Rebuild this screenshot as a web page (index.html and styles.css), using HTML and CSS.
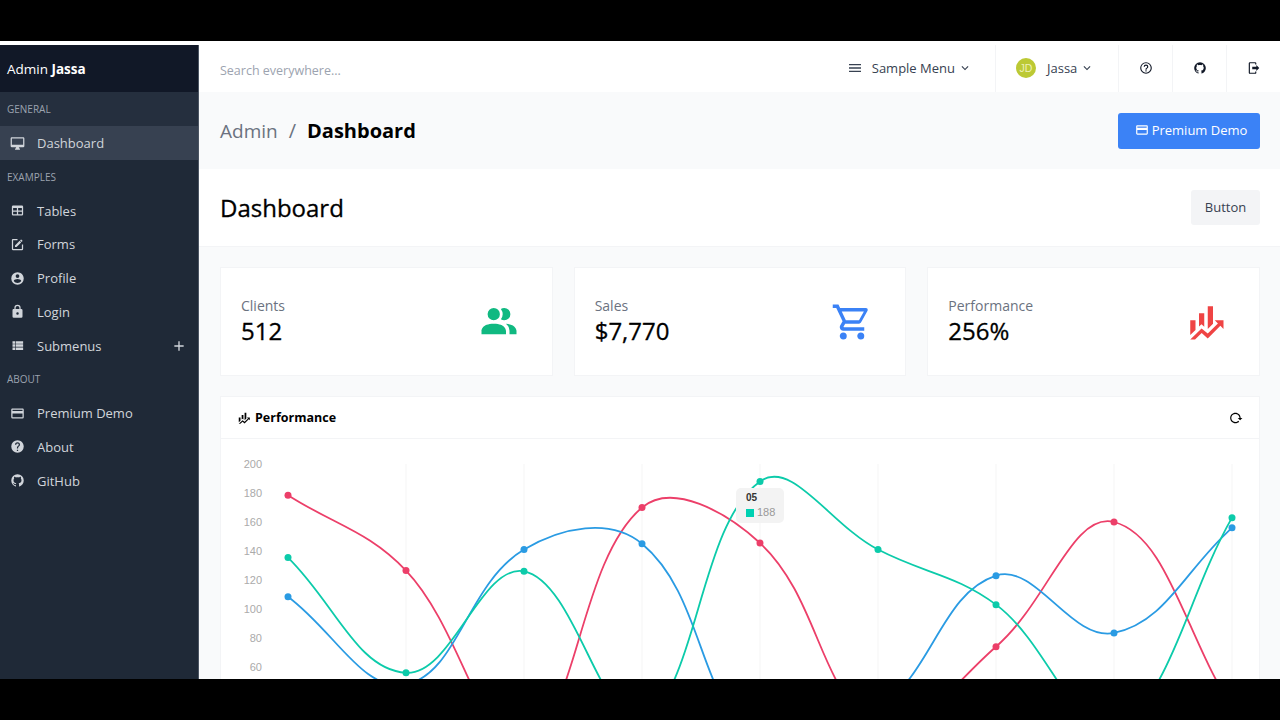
FILE: index.html
```html
<!DOCTYPE html>
<html lang="en">
<head>
  <meta charset="UTF-8" />
  <title>Admin Jassa - Dashboard</title>
  <link rel="stylesheet" href="styles.css">
</head>
<body>
  <svg class="sprite" xmlns="http://www.w3.org/2000/svg">
    <symbol id="i-monitor" viewBox="0 0 24 24"><path d="M21,14H3V4H21M21,2H3C1.89,2 1,2.89 1,4V16A2,2 0 0,0 3,18H10L8,21V22H16V21L14,18H21A2,2 0 0,0 23,16V4C23,2.89 22.1,2 21,2Z"/></symbol>
    <symbol id="i-table" viewBox="0 0 24 24"><path d="M5,4H19A2,2 0 0,1 21,6V18A2,2 0 0,1 19,20H5A2,2 0 0,1 3,18V6A2,2 0 0,1 5,4M5,8V12H11V8H5M13,8V12H19V8H13M5,14V18H11V14H5M13,14V18H19V14H13Z"/></symbol>
    <symbol id="i-edit" viewBox="0 0 24 24"><path d="M5,3C3.89,3 3,3.89 3,5V19A2,2 0 0,0 5,21H19A2,2 0 0,0 21,19V12H19V19H5V5H12V3H5M17.78,4C17.59,4 17.39,4.07 17.24,4.22L16.02,5.43L18.52,7.93L19.74,6.72C20.04,6.43 20.04,5.96 19.74,5.66L18.34,4.22C18.19,4.07 17.99,4 17.78,4M15.37,6.12L8,13.5V16H10.5L17.87,8.62L15.37,6.12Z"/></symbol>
    <symbol id="i-account" viewBox="0 0 24 24"><path d="M12,19.2C9.5,19.2 7.29,17.92 6,16C6.03,14 10,12.9 12,12.9C14,12.9 17.97,14 18,16C16.71,17.92 14.5,19.2 12,19.2M12,5A3,3 0 0,1 15,8A3,3 0 0,1 12,11A3,3 0 0,1 9,8A3,3 0 0,1 12,5M12,2A10,10 0 0,0 2,12A10,10 0 0,0 12,22A10,10 0 0,0 22,12C22,6.47 17.5,2 12,2Z"/></symbol>
    <symbol id="i-lock" viewBox="0 0 24 24"><path d="M12,17A2,2 0 0,0 14,15C14,13.89 13.1,13 12,13A2,2 0 0,0 10,15A2,2 0 0,0 12,17M18,8A2,2 0 0,1 20,10V20A2,2 0 0,1 18,22H6A2,2 0 0,1 4,20V10C4,8.89 4.9,8 6,8H7V6A5,5 0 0,1 12,1A5,5 0 0,1 17,6V8H18M12,3A3,3 0 0,0 9,6V8H15V6A3,3 0 0,0 12,3Z"/></symbol>
    <symbol id="i-list" viewBox="0 0 24 24"><path d="M9,5V9H21V5M9,19H21V15H9M9,14H21V10H9M4,9H8V5H4M4,19H8V15H4M4,14H8V10H4V14Z"/></symbol>
    <symbol id="i-card" viewBox="0 0 24 24"><path d="M20,8H4V6H20M20,18H4V12H20M20,4H4C2.89,4 2,4.89 2,6V18A2,2 0 0,0 4,20H20A2,2 0 0,0 22,18V6C22,4.89 21.1,4 20,4Z"/></symbol>
    <symbol id="i-help" viewBox="0 0 24 24"><path d="M15.07,11.25L14.17,12.17C13.45,12.89 13,13.5 13,15H11V14.5C11,13.39 11.45,12.39 12.17,11.67L13.41,10.41C13.78,10.05 14,9.55 14,9C14,7.89 13.1,7 12,7A2,2 0 0,0 10,9H8A4,4 0 0,1 12,5A4,4 0 0,1 16,9C16,9.88 15.64,10.67 15.07,11.25M13,19H11V17H13M12,2A10,10 0 0,0 2,12A10,10 0 0,0 12,22A10,10 0 0,0 22,12C22,6.47 17.5,2 12,2Z"/></symbol>
    <symbol id="i-help-outline" viewBox="0 0 24 24"><path d="M11,18H13V16H11V18M12,2A10,10 0 0,0 2,12A10,10 0 0,0 12,22A10,10 0 0,0 22,12A10,10 0 0,0 12,2M12,20C7.59,20 4,16.41 4,12C4,7.59 7.59,4 12,4C16.41,4 20,7.59 20,12C20,16.41 16.41,20 12,20M12,6A4,4 0 0,0 8,10H10A2,2 0 0,1 12,8A2,2 0 0,1 14,10C14,12 11,11.75 11,15H13C13,12.75 16,12.5 16,10A4,4 0 0,0 12,6Z"/></symbol>
    <symbol id="i-github" viewBox="0 0 24 24"><path d="M12,2A10,10 0 0,0 2,12C2,16.42 4.87,20.17 8.84,21.5C9.34,21.58 9.5,21.27 9.5,21C9.5,20.77 9.5,20.14 9.5,19.31C6.73,19.91 6.14,17.97 6.14,17.97C5.68,16.81 5.03,16.5 5.03,16.5C4.12,15.88 5.1,15.9 5.1,15.9C6.1,15.97 6.63,16.93 6.63,16.93C7.5,18.45 8.97,18 9.54,17.76C9.63,17.11 9.89,16.67 10.17,16.42C7.95,16.17 5.62,15.31 5.62,11.5C5.62,10.39 6,9.5 6.65,8.79C6.55,8.54 6.2,7.5 6.75,6.15C6.75,6.15 7.59,5.88 9.5,7.17C10.29,6.95 11.15,6.84 12,6.84C12.85,6.84 13.71,6.95 14.5,7.17C16.41,5.88 17.25,6.15 17.25,6.15C17.8,7.5 17.45,8.54 17.35,8.79C18,9.5 18.38,10.39 18.38,11.5C18.38,15.32 16.04,16.16 13.81,16.41C14.17,16.72 14.5,17.33 14.5,18.26C14.5,19.6 14.5,20.68 14.5,21C14.5,21.27 14.66,21.59 15.17,21.5C19.14,20.16 22,16.42 22,12A10,10 0 0,0 12,2Z"/></symbol>
    <symbol id="i-logout" viewBox="0 0 24 24"><path d="M16,17V14H9V10H16V7L21,12L16,17M14,2A2,2 0 0,1 16,4V6H14V4H5V20H14V18H16V20A2,2 0 0,1 14,22H5A2,2 0 0,1 3,20V4A2,2 0 0,1 5,2H14Z"/></symbol>
    <symbol id="i-menu" viewBox="0 0 24 24"><path d="M3,6H21V8H3V6M3,11H21V13H3V11M3,16H21V18H3V16Z"/></symbol>
    <symbol id="i-chevron" viewBox="0 0 24 24"><path d="M7.41,8.58L12,13.17L16.59,8.58L18,10L12,16L6,10L7.41,8.58Z"/></symbol>
    <symbol id="i-plus" viewBox="0 0 24 24"><path d="M19,13H13V19H11V13H5V11H11V5H13V11H19V13Z"/></symbol>
    <symbol id="i-people" viewBox="0 0 24 24"><path d="M16 17V19H2V17S2 13 9 13 16 17 16 17M12.5 7.5A3.5 3.5 0 1 0 9 11A3.5 3.5 0 0 0 12.5 7.5M15.94 13A5.32 5.32 0 0 1 18 17V19H22V17S22 13.37 15.94 13M15 4A3.39 3.39 0 0 0 13.07 4.59A5 5 0 0 1 13.07 10.41A3.39 3.39 0 0 0 15 11A3.5 3.5 0 0 0 15 4Z"/></symbol>
    <symbol id="i-cart" viewBox="0 0 24 24"><path d="M17,18A2,2 0 0,1 19,20A2,2 0 0,1 17,22C15.89,22 15,21.1 15,20C15,18.89 15.89,18 17,18M1,2H4.27L5.21,4H20A1,1 0 0,1 21,5C21,5.17 20.95,5.34 20.88,5.5L17.3,11.97C16.96,12.58 16.3,13 15.55,13H8.1L7.2,14.63L7.17,14.75A0.25,0.25 0 0,0 7.42,15H19V17H7C5.89,17 5,16.1 5,15C5,14.65 5.09,14.32 5.24,14.04L6.6,11.59L3,4H1V2M7,18A2,2 0 0,1 9,20A2,2 0 0,1 7,22C5.89,22 5,21.1 5,20C5,18.89 5.89,18 7,18M16,11L18.78,6H6.14L8.5,11H16Z"/></symbol>
    <symbol id="i-finance" viewBox="0 0 24 24"><path d="M6,16.5L3,19.44V11H6M11,14.66L9.43,13.32L8,14.64V7H11M16,13L13,16V3H16M18.81,12.81L17,11H22V16L20.21,14.21L13,21.36L9.53,18.34L5.75,22H3L9.47,15.66L13,18.64"/></symbol>
    <symbol id="i-reload" viewBox="0 0 24 24"><path d="M2 12C2 16.97 6.03 21 11 21C13.39 21 15.68 20.06 17.4 18.4L15.9 16.9C14.63 18.25 12.86 19 11 19C4.76 19 1.64 11.46 6.05 7.05C10.46 2.64 18 5.77 18 12H15L19 16H19.1L23 12H20C20 7.03 15.97 3 11 3C6.03 3 2 7.03 2 12Z"/></symbol>
  </svg>

  <div class="letterbox-top"></div>
  <div class="app">
    <aside class="sidebar">
      <div class="brand">Admin&nbsp;<b>Jassa</b></div>
      <div class="nav-label nav-label-first">General</div>
      <a class="nav-item active"><svg class="nav-icon"><use href="#i-monitor"/></svg>Dashboard</a>
      <div class="nav-label">Examples</div>
      <a class="nav-item"><svg class="nav-icon"><use href="#i-table"/></svg>Tables</a>
      <a class="nav-item"><svg class="nav-icon"><use href="#i-edit"/></svg>Forms</a>
      <a class="nav-item"><svg class="nav-icon"><use href="#i-account"/></svg>Profile</a>
      <a class="nav-item"><svg class="nav-icon"><use href="#i-lock"/></svg>Login</a>
      <a class="nav-item"><svg class="nav-icon"><use href="#i-list"/></svg>Submenus<svg class="nav-plus"><use href="#i-plus"/></svg></a>
      <div class="nav-label">About</div>
      <a class="nav-item"><svg class="nav-icon"><use href="#i-card"/></svg>Premium Demo</a>
      <a class="nav-item"><svg class="nav-icon"><use href="#i-help"/></svg>About</a>
      <a class="nav-item"><svg class="nav-icon"><use href="#i-github"/></svg>GitHub</a>
    </aside>

    <div class="main">
      <header class="navbar">
        <input class="search" type="text" placeholder="Search everywhere...">
        <div class="nav-link nav-menu"><svg class="icon-16 menu-icon"><use href="#i-menu"/></svg><span>Sample Menu</span><svg class="icon-14 menu-chevron"><use href="#i-chevron"/></svg></div>
        <div class="nav-link nav-user"><span class="avatar">JD</span><span>Jassa</span><svg class="icon-14"><use href="#i-chevron"/></svg></div>
        <div class="nav-link nav-square"><svg class="icon-14"><use href="#i-help-outline"/></svg></div>
        <div class="nav-link nav-square"><svg class="icon-14"><use href="#i-github"/></svg></div>
        <div class="nav-link nav-square nav-last"><svg class="icon-14"><use href="#i-logout"/></svg></div>
      </header>

      <section class="title-bar">
        <div class="crumbs"><span class="crumb-root">Admin</span><span class="crumb-sep">/</span><b>Dashboard</b></div>
        <button class="btn btn-blue"><svg class="icon-14"><use href="#i-card"/></svg>Premium Demo</button>
      </section>

      <section class="hero-bar">
        <h1>Dashboard</h1>
        <button class="btn btn-light">Button</button>
      </section>

      <section class="content">
        <div class="stats">
          <div class="stat-card">
            <div class="stat-text"><div class="stat-label">Clients</div><div class="stat-value">512</div></div>
            <svg class="stat-icon green"><use href="#i-people"/></svg>
          </div>
          <div class="stat-card">
            <div class="stat-text"><div class="stat-label">Sales</div><div class="stat-value">$7,770</div></div>
            <svg class="stat-icon blue"><use href="#i-cart"/></svg>
          </div>
          <div class="stat-card">
            <div class="stat-text"><div class="stat-label">Performance</div><div class="stat-value">256%</div></div>
            <svg class="stat-icon red"><use href="#i-finance"/></svg>
          </div>
        </div>

        <div class="chart-card">
          <div class="chart-head">
            <svg class="icon-14"><use href="#i-finance"/></svg>
            <span class="chart-title">Performance</span>
            <svg class="icon-14 chart-reload"><use href="#i-reload"/></svg>
          </div>
          <div class="chart-body">
            <svg id="chart" class="chart" xmlns="http://www.w3.org/2000/svg"></svg>
            <div class="tooltip">
              <div class="tooltip-title">05</div>
              <div class="tooltip-row"><i class="tooltip-key"></i>188</div>
            </div>
          </div>
        </div>
      </section>
    </div>
  </div>
  <script src="chart.js"></script>
</body>
</html>
```

FILE: styles.css
```css
* {
  box-sizing: border-box;
}
html, body {
  height: 100%;
}
body {
  margin: 0;
  background-color: #000;
  overflow: hidden;
  font-family: "Open Sans", "Noto Sans", Arial, sans-serif;
  font-size: 13px;
  color: #111827;
}
.sprite {
  display: none;
}
svg {
  fill: currentColor;
  flex-shrink: 0;
}
.letterbox-top {
  height: 41px;
}
.app {
  display: flex;
  height: 638px;
  padding-top: 4px;
  background-color: #fff;
  overflow: hidden;
}

/* sidebar */
.sidebar {
  width: 199px;
  flex-shrink: 0;
  background-color: #1f2937;
  color: #d1d5db;
  border-right: 1px solid #4b5563;
}
.brand {
  height: 47px;
  padding-left: 7px;
  display: flex;
  align-items: center;
  background-color: #111827;
  color: #fff;
  font-size: 13.5px;
}
.nav-label {
  height: 33.75px;
  padding: 1px 0 0 7px;
  display: flex;
  align-items: center;
  font-size: 10px;
  text-transform: uppercase;
  color: #9ca3af;
}
.nav-label-first {
  background-color: #252f3e;
}
.nav-item {
  height: 33.75px;
  padding-top: 1px;
  display: flex;
  align-items: center;
}
.nav-item.active {
  background-color: #374151;
}
.nav-icon {
  width: 15px;
  height: 15px;
  margin: 0 12.5px 0 9.5px;
}
.nav-plus {
  width: 16px;
  height: 16px;
  margin-left: auto;
  margin-right: 11px;
}

/* top navbar */
.main {
  flex: 1;
  min-width: 0;
  background-color: #f9fafb;
}
.navbar {
  height: 47px;
  background-color: #fff;
  display: flex;
  align-items: stretch;
}
.search {
  flex: 1;
  min-width: 0;
  margin-top: 4px;
  border: none;
  outline: none;
  padding: 0 0 0 21px;
  background: transparent;
  font-family: inherit;
  font-size: 12.5px;
}
.search::placeholder {
  color: #9ca3af;
  opacity: 1;
}
.nav-link {
  display: flex;
  align-items: center;
  color: #374151;
  border-right: 1px solid #f3f4f6;
  padding-bottom: 1px;
}
.nav-menu {
  padding-right: 23px;
}
.menu-icon {
  margin-right: 9px;
}
.menu-chevron {
  margin-left: 3px;
}
.nav-user {
  width: 123px;
  padding-left: 20px;
}
.nav-user .icon-14 {
  margin-left: 3px;
}
.nav-square {
  width: 54px;
  justify-content: center;
  color: #111827;
}
.nav-last {
  width: 53px;
  border-right: none;
}
.avatar {
  width: 20px;
  height: 20px;
  margin-right: 11px;
  border-radius: 50%;
  background-color: #bcc934;
  color: #eef2b8;
  font-family: "Liberation Sans", Arial, sans-serif;
  font-size: 10.5px;
  display: flex;
  align-items: center;
  justify-content: center;
}
.icon-14 {
  width: 14px;
  height: 14px;
}
.icon-16 {
  width: 16px;
  height: 16px;
}

/* title and hero */
.title-bar {
  height: 77px;
  padding: 0 20px 0 21px;
  display: flex;
  align-items: center;
  justify-content: space-between;
}
.crumbs {
  font-size: 20px;
  color: #000;
}
.crumb-root {
  font-size: 19px;
  color: #6b7280;
}
.crumb-sep {
  color: #6b7280;
  margin: 0 11px;
}
.btn {
  border: none;
  border-radius: 3px;
  padding: 0 0 2px;
  font-family: inherit;
  font-size: 13px;
  display: flex;
  align-items: center;
}
.btn-blue {
  width: 142px;
  height: 36px;
  padding-left: 4px;
  justify-content: center;
  gap: 3px;
  background-color: #3b82f6;
  color: #fff;
}
.btn-light {
  width: 69px;
  height: 35px;
  justify-content: center;
  background-color: #f3f4f6;
  color: #374151;
}
.hero-bar {
  height: 78px;
  padding: 0 20px 0 21px;
  display: flex;
  align-items: center;
  justify-content: space-between;
  background-color: #fff;
  border-bottom: 1px solid #f3f4f6;
}
.hero-bar h1 {
  margin: 0;
  font-size: 24px;
  font-weight: 500;
  color: #000;
  -webkit-text-stroke: 0.3px #000;
}

/* cards */
.content {
  padding: 20px 20px 0 21px;
}
.stats {
  display: grid;
  grid-template-columns: repeat(3, 1fr);
  gap: 21px;
  margin-bottom: 20px;
}
.stat-card {
  height: 109px;
  padding: 0 20px;
  display: flex;
  align-items: center;
  justify-content: space-between;
  background-color: #fff;
  border: 1px solid #f3f4f6;
}
.stat-text {
  padding-bottom: 4px;
}
.stat-label {
  font-size: 14px;
  line-height: 21px;
  color: #6b7280;
}
.stat-value {
  font-size: 24px;
  line-height: 29px;
  font-weight: 500;
  color: #000;
  -webkit-text-stroke: 0.3px #000;
}
.stat-icon {
  width: 42px;
  height: 42px;
  margin-right: 12px;
}
.green {
  color: #10b981;
}
.blue {
  color: #3b82f6;
}
.red {
  color: #ef4444;
}
.chart-card {
  background-color: #fff;
  border: 1px solid #f3f4f6;
}
.chart-head {
  height: 42px;
  padding: 0 16px 0 16px;
  display: flex;
  align-items: center;
  gap: 4px;
  border-bottom: 1px solid #f3f4f6;
  color: #000;
}
.chart-title {
  font-weight: 700;
  font-size: 12.5px;
}
.chart-reload {
  margin-left: auto;
}
.chart-body {
  position: relative;
  height: 300px;
}
.chart {
  display: block;
  width: 100%;
  height: 100%;
}
.chart .tick {
  font-family: "Liberation Sans", Arial, sans-serif;
  font-size: 11px;
  fill: #aaa;
  text-anchor: end;
}
.tooltip {
  position: absolute;
  left: 515px;
  top: 49px;
  width: 48px;
  height: 35px;
  padding: 2px 0 0 10px;
  border-radius: 5px;
  background-color: #f3f3f3;
  font-family: "Liberation Sans", Arial, sans-serif;
  font-size: 10px;
  line-height: 15px;
  color: #999;
}
.tooltip-title {
  font-weight: 700;
  color: #333;
}
.tooltip-row {
  display: flex;
  align-items: center;
  gap: 3px;
  font-size: 11px;
}
.tooltip-key {
  width: 8px;
  height: 8px;
  background-color: #00d1b2;
}
```

FILE: chart.js
```js
const X0 = 67, STEP = 118, TOP = 25, PER_UNIT = 1.45, TENSION = 0.4;
const series = [
  { color: '#ec3f69', data: [178.5, 126.5, 8, 170, 145.5, 20, 74, 160, 32] },
  { color: '#2a9be3', data: [108.5, 48, 141, 145, 5, 30, 123, 83.5, 156] },
  { color: '#0ccbaa', data: [135.5, 56, 126, 25, 188, 141, 103, 20, 163] }
];
const chart = document.getElementById('chart');
let html = '';

function toPoint(v, i) {
  return { x: X0 + i * STEP, y: TOP + (200 - v) * PER_UNIT };
}

// same curve as chart.js line tension
function buildPath(pts) {
  const cps = pts.map((p, i) => {
    const a = pts[i - 1] || p, b = pts[i + 1] || p;
    const d1 = Math.hypot(p.x - a.x, p.y - a.y), d2 = Math.hypot(b.x - p.x, b.y - p.y);
    const total = d1 + d2 || 1;
    const f1 = TENSION * d1 / total, f2 = TENSION * d2 / total;
    return {
      px: p.x - f1 * (b.x - a.x), py: p.y - f1 * (b.y - a.y),
      nx: p.x + f2 * (b.x - a.x), ny: p.y + f2 * (b.y - a.y)
    };
  });
  let d = `M${pts[0].x} ${pts[0].y}`;
  for (let i = 1; i < pts.length; i++) {
    d += `C${cps[i - 1].nx} ${cps[i - 1].ny} ${cps[i].px} ${cps[i].py} ${pts[i].x} ${pts[i].y}`;
  }
  return d;
}

for (let i = 1; i < 9; i++) {
  const x = X0 + i * STEP;
  html += `<line x1="${x}" y1="${TOP}" x2="${x}" y2="300" stroke="#f5f5f5"/>`;
}
// lower ticks sit below the visible part of the page
for (let v = 200; v >= 60; v -= 20) {
  html += `<text class="tick" x="41" y="${TOP + (200 - v) * PER_UNIT + 4}">${v}</text>`;
}
series.forEach(s => {
  const pts = s.data.map(toPoint);
  html += `<path d="${buildPath(pts)}" fill="none" stroke="${s.color}" stroke-width="1.8"/>`;
  pts.forEach(p => {
    html += `<circle cx="${p.x}" cy="${p.y}" r="3.5" fill="${s.color}"/>`;
  });
});
chart.innerHTML = html;
```
